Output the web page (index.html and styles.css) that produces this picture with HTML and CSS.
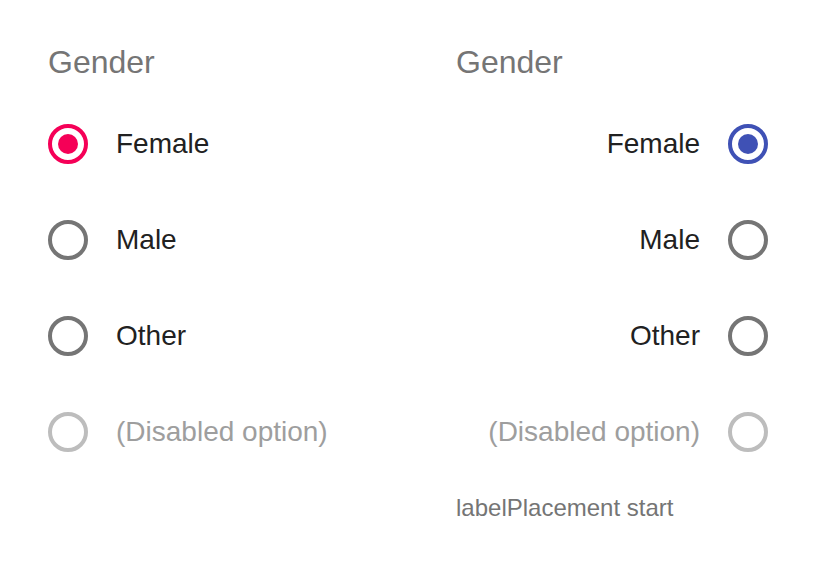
FILE: index.html
```html
<!DOCTYPE html>
<html>
<head>
<meta charset="utf-8">
<link rel="stylesheet" href="styles.css">
</head>
<body>
<div class="page">
  <fieldset class="group">
    <div class="legend">Gender</div>
    <div class="rows">
      <label class="row"><span class="radio checked pink"><span class="dot"></span></span><span class="text">Female</span></label>
      <label class="row"><span class="radio"></span><span class="text">Male</span></label>
      <label class="row"><span class="radio"></span><span class="text">Other</span></label>
      <label class="row disabled"><span class="radio"></span><span class="text">(Disabled option)</span></label>
    </div>
  </fieldset>
  <fieldset class="group">
    <div class="legend">Gender</div>
    <div class="rows">
      <label class="row start"><span class="text">Female</span><span class="radio checked blue"><span class="dot"></span></span></label>
      <label class="row start"><span class="text">Male</span><span class="radio"></span></label>
      <label class="row start"><span class="text">Other</span><span class="radio"></span></label>
      <label class="row start disabled"><span class="text">(Disabled option)</span><span class="radio"></span></label>
    </div>
    <div class="helper">labelPlacement start</div>
  </fieldset>
</div>
</body>
</html>
```

FILE: styles.css
```css
html, body {
  margin: 0;
  padding: 0;
  background: #fff;
}
body {
  font-family: "Liberation Sans", Arial, sans-serif;
}
.page {
  display: grid;
  grid-template-columns: 408px 312px;
  padding: 38px 48px 0 48px;
}
.group {
  border: 0;
  margin: 0;
  padding: 0;
  min-width: 0;
}
.legend {
  font-size: 32px;
  line-height: 48px;
  height: 48px;
  color: #757575;
}
.rows {
  margin-top: 10px;
  display: flex;
  flex-direction: column;
}
.row {
  height: 96px;
  display: flex;
  align-items: center;
  gap: 28px;
}
.row.start {
  justify-content: flex-end;
}
.text {
  font-size: 28px;
  line-height: 40px;
  color: #212121;
}
.radio {
  width: 40px;
  height: 40px;
  box-sizing: border-box;
  border: 4px solid #757575;
  border-radius: 50%;
  display: flex;
  align-items: center;
  justify-content: center;
  flex: none;
}
.radio.pink {
  border-color: #f50057;
}
.radio.pink .dot {
  background: #f50057;
}
.radio.blue {
  border-color: #3f51b5;
}
.radio.blue .dot {
  background: #3f51b5;
}
.dot {
  width: 20px;
  height: 20px;
  border-radius: 50%;
}
.disabled .text {
  color: #9e9e9e;
}
.disabled .radio {
  border-color: #bdbdbd;
}
.helper {
  margin-top: 12px;
  font-size: 24px;
  line-height: 32px;
  color: #757575;
}
```
